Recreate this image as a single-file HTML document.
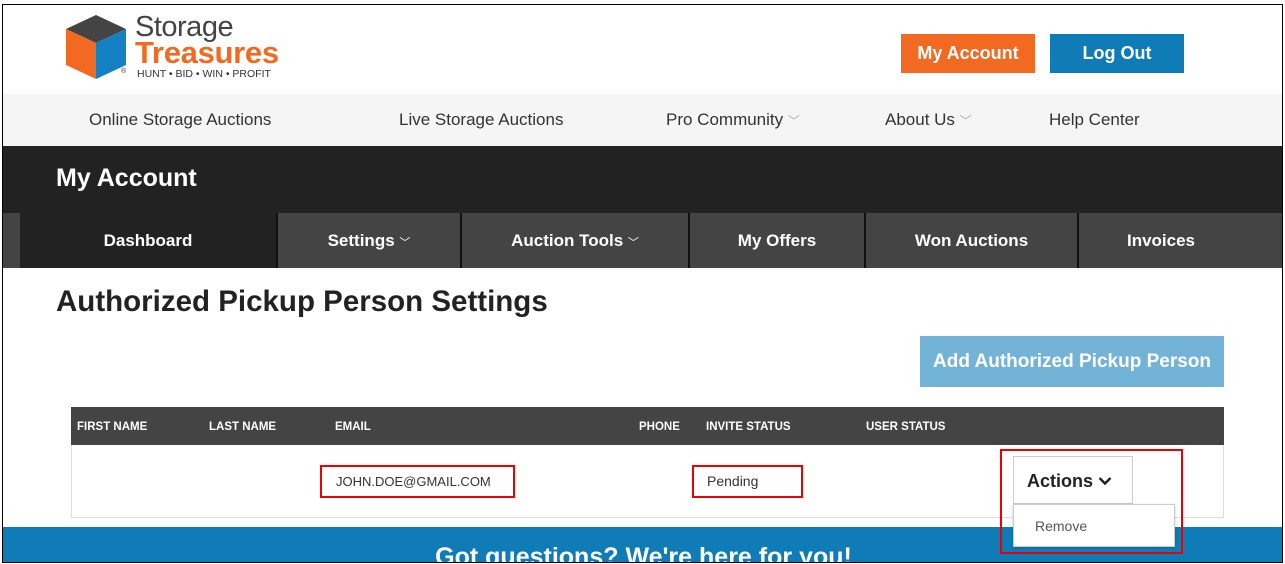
<!DOCTYPE html>
<html><head><meta charset="utf-8"><style>
*{margin:0;padding:0;box-sizing:border-box}
body{width:1285px;height:564px;overflow:hidden;background:#fff;font-family:"Liberation Sans",sans-serif;position:relative}
.a{position:absolute}
.frame{left:2px;top:4px;width:1281px;height:559px;border:1px solid #000;overflow:hidden}
.nav span{position:absolute;top:16px;font-size:17px;color:#333}
.tab{position:absolute;top:0;height:55px;background:#444;color:#fff;font-weight:bold;font-size:17px;text-align:center;line-height:55px}
.th{position:absolute;top:14px;font-size:11.5px;font-weight:bold;color:#fff}
</style></head><body>
<div class="a frame">
 <svg class="a" style="left:62px;top:10px" width="62" height="66" viewBox="0 0 62 66"><polygon points="31,0 61,14 31,28 1,14" fill="#444"/><polygon points="1,14 31,28 31,64 1,50" fill="#f26a21"/><polygon points="61,14 31,28 31,64 61,50" fill="#1381c4"/></svg>
 <div class="a" style="left:132px;top:6px;font-size:29px;color:#444;letter-spacing:-0.5px">Storage</div>
 <div class="a" style="left:132px;top:30px;font-size:31px;color:#f26a21;font-weight:bold;letter-spacing:-0.3px">Treasures</div>
 <div class="a" style="left:118px;top:63px;font-size:7px;color:#333">®</div>
 <div class="a" style="left:134px;top:63px;font-size:10.5px;color:#333">HUNT • BID • WIN • PROFIT</div>
 <div class="a" style="left:898px;top:29px;width:134px;height:39px;background:#f26a21;color:#fff;font-weight:bold;font-size:18px;text-align:center;line-height:39px">My Account</div>
 <div class="a" style="left:1047px;top:29px;width:134px;height:39px;background:#0f7cb8;color:#fff;font-weight:bold;font-size:18px;text-align:center;line-height:39px">Log Out</div>
 <div class="a nav" style="left:0;top:89px;width:1281px;height:52px;background:#f5f5f5">
  <span style="left:86px">Online Storage Auctions</span>
  <span style="left:396px">Live Storage Auctions</span>
  <span style="left:663px">Pro Community <span style="position:static;color:#aaa;font-size:12px">﹀</span></span>
  <span style="left:882px">About Us <span style="position:static;color:#aaa;font-size:12px">﹀</span></span>
  <span style="left:1046px">Help Center</span>
 </div>
 <div class="a" style="left:0;top:141px;width:1281px;height:67px;background:#222"><div class="a" style="left:53px;top:18px;color:#fff;font-weight:bold;font-size:25px">My Account</div></div>
 <div class="a" style="left:0;top:208px;width:1281px;height:55px;background:#444">
  <div class="tab" style="left:17px;width:256px;background:#222">Dashboard</div>
  <div class="tab" style="left:275px;width:182px">Settings <span style="font-size:11px;font-weight:normal">﹀</span></div>
  <div class="tab" style="left:459px;width:226px">Auction Tools <span style="font-size:11px;font-weight:normal">﹀</span></div>
  <div class="tab" style="left:687px;width:174px">My Offers</div>
  <div class="tab" style="left:863px;width:211px">Won Auctions</div>
  <div class="tab" style="left:1076px;width:164px">Invoices</div>
  <div class="a" style="left:273px;top:0;width:2px;height:55px;background:#111"></div>
  <div class="a" style="left:457px;top:0;width:2px;height:55px;background:#111"></div>
  <div class="a" style="left:685px;top:0;width:2px;height:55px;background:#111"></div>
  <div class="a" style="left:861px;top:0;width:2px;height:55px;background:#111"></div>
  <div class="a" style="left:1074px;top:0;width:2px;height:55px;background:#111"></div>
 </div>
 <div class="a" style="left:53px;top:280px;font-size:29.5px;font-weight:bold;color:#222">Authorized Pickup Person Settings</div>
 <div class="a" style="left:917px;top:331px;width:304px;height:51px;background:#74b3d8;color:#fff;font-weight:bold;font-size:19px;text-align:center;line-height:51px;white-space:nowrap">Add Authorized Pickup Person</div>
 <div class="a" style="left:68px;top:402px;width:1153px;height:38px;background:#444">
  <div class="th" style="left:6px">FIRST NAME</div><div class="th" style="left:138px">LAST NAME</div><div class="th" style="left:264px">EMAIL</div><div class="th" style="left:568px">PHONE</div><div class="th" style="left:635px">INVITE STATUS</div><div class="th" style="left:795px">USER STATUS</div>
 </div>
 <div class="a" style="left:68px;top:440px;width:1153px;height:73px;border:1px solid #ddd;border-top:none"></div>
 <div class="a" style="left:317px;top:460px;width:195px;height:33px;border:2px solid #e00;font-size:13px;color:#333;line-height:29px;padding-left:14px">JOHN.DOE@GMAIL.COM</div>
 <div class="a" style="left:689px;top:460px;width:111px;height:33px;border:2px solid #e00;font-size:14px;color:#333;line-height:29px;padding-left:13px">Pending</div>
 <div class="a" style="left:0;top:522px;width:1281px;height:40px;background:#0f7cb8;color:#fff;font-weight:bold;font-size:25px;text-align:center;padding-top:16px">Got questions? We're here for you!</div>
 <div class="a" style="left:1010px;top:451px;width:120px;height:48px;border:1px solid #ccc;background:#fff;font-weight:bold;font-size:18px;color:#222;line-height:48px;padding-left:13px">Actions <svg width="14" height="10" viewBox="0 0 14 10" style="vertical-align:1px"><path d="M1.5 2 L7 7.5 L12.5 2" fill="none" stroke="#222" stroke-width="2.4"/></svg></div>
 <div class="a" style="left:1010px;top:499px;width:162px;height:43px;border:1px solid #ccc;background:#fff;box-shadow:0 1px 3px rgba(0,0,0,.2);font-size:14px;color:#555;line-height:42px;padding-left:21px">Remove</div>
 <div class="a" style="left:997px;top:444px;width:183px;height:105px;border:2px solid #e00"></div>
</div>
</body></html>
